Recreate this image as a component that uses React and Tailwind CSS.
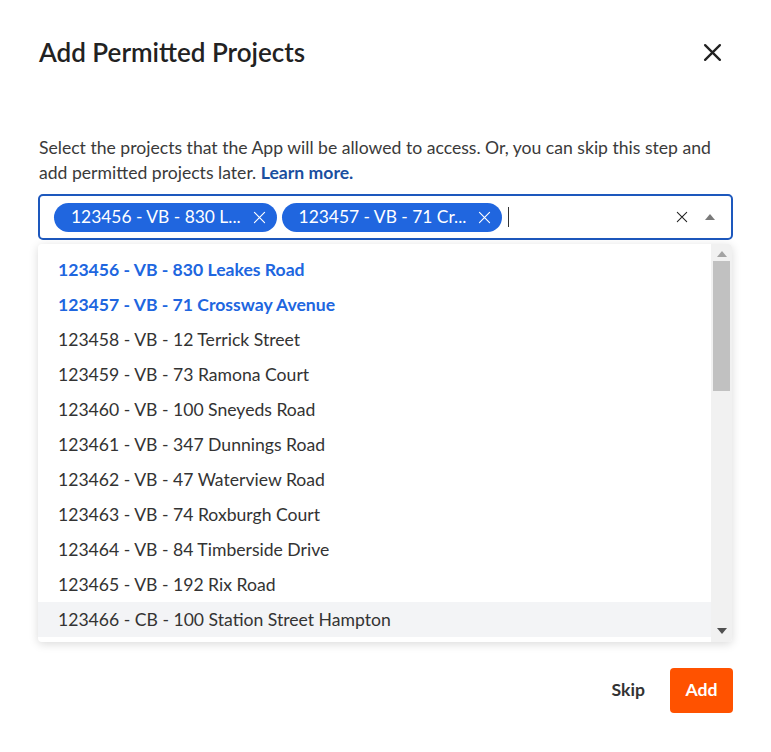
import React from 'react';

const projects = [
  { label: '123456 - VB - 830 Leakes Road', selected: true },
  { label: '123457 - VB - 71 Crossway Avenue', selected: true },
  { label: '123458 - VB - 12 Terrick Street' },
  { label: '123459 - VB - 73 Ramona Court' },
  { label: '123460 - VB - 100 Sneyeds Road' },
  { label: '123461 - VB - 347 Dunnings Road' },
  { label: '123462 - VB - 47 Waterview Road' },
  { label: '123463 - VB - 74 Roxburgh Court' },
  { label: '123464 - VB - 84 Timberside Drive' },
  { label: '123465 - VB - 192 Rix Road' },
  { label: '123466 - CB - 100 Station Street Hampton', active: true },
];

const CloseIcon = ({ size = 18, stroke = 2, className = '' }) => (
  <svg width={size} height={size} viewBox="0 0 18 18" className={className} fill="none" stroke="currentColor" strokeWidth={stroke} strokeLinecap="round">
    <path d="M2 2L16 16M16 2L2 16" />
  </svg>
);

const Chip = ({ text }) => (
  <div className="flex items-center h-[29px] rounded-full bg-[#2066df] pl-[17px] pr-[11px] text-white text-[17.4px] leading-none">
    <span className="whitespace-nowrap">{text}</span>
    <CloseIcon size={13} stroke={1.6} className="ml-[12px]" />
  </div>
);

const App = () => {
  return (
    <div className="w-[771px] h-[752px] bg-white px-[38px] text-[#333] relative" style={{ fontFamily: 'Lato, "Noto Sans", sans-serif' }}>
      <div className="flex items-center justify-between pt-[36px] h-[68px]">
        <h2 className="pl-[1px] text-[26px] leading-[32px] font-semibold text-[#222]">Add Permitted Projects</h2>
        <button className="mr-[11px] text-[#222]">
          <CloseIcon size={19} stroke={2.2} />
        </button>
      </div>

      <p className="mt-[67px] pl-[1px] text-[17.6px] leading-[25px] text-[#3a3a3a]">
        Select the projects that the App will be allowed to access. Or, you can skip this step and add permitted projects later.{' '}
        <a className="font-bold text-[#1a4f9f]" href="#">Learn more.</a>
      </p>

      <div className="relative mt-[9px]">
        <div className="flex items-center h-[46px] border-2 border-[#1d58bd] rounded-[5px] pl-[14px] pr-[14px]">
          <div className="flex items-center gap-[5px]">
            <Chip text="123456 - VB - 830 L..." />
            <Chip text="123457 - VB - 71 Cr..." />
          </div>
          <div className="ml-[6px] w-[1px] h-[20px] bg-[#333]" />
          <div className="flex-1" />
          <CloseIcon size={12} stroke={1.6} className="text-[#222] mr-[17px]" />
          <svg width="10" height="6" viewBox="0 0 10 6" className="mr-[2px]">
            <path d="M0 6L5 0L10 6Z" fill="#7a7a7a" />
          </svg>
        </div>

        <div className="absolute left-0 top-[50px] w-[694px] h-[398px] bg-white rounded-[4px] shadow-[0_2px_10px_rgba(0,0,0,0.15)] flex overflow-hidden">
          <ul className="flex-1 pt-[8px]">
            {projects.map((p) => (
              <li
                key={p.label}
                className={`h-[35px] flex items-center pl-[20px] pt-[2px] text-[17.6px] whitespace-nowrap ${p.selected ? 'font-bold text-[#2066df]' : 'text-[#333]'} ${p.active ? 'bg-[#f3f4f6]' : ''}`}
              >
                {p.label}
              </li>
            ))}
          </ul>
          <div className="w-[21px] bg-[#f1f1f1] flex flex-col items-center">
            <svg width="10" height="6" viewBox="0 0 10 6" className="mt-[7px]">
              <path d="M0 6L5 0L10 6Z" fill="#a3a3a3" />
            </svg>
            <div className="mt-[4px] w-[17px] h-[130px] bg-[#c1c1c1]" />
            <div className="flex-1" />
            <svg width="10" height="6" viewBox="0 0 10 6" className="mb-[8px]">
              <path d="M0 0L10 0L5 6Z" fill="#505050" />
            </svg>
          </div>
        </div>
      </div>

      <div className="mt-[428px] flex items-center justify-end gap-[25px]">
        <button className="text-[17.6px] font-bold text-[#333]">Skip</button>
        <button className="w-[63px] h-[45px] rounded-[4px] bg-[#ff5200] text-white text-[17.6px] font-bold">Add</button>
      </div>
    </div>
  );
};

export default App;
